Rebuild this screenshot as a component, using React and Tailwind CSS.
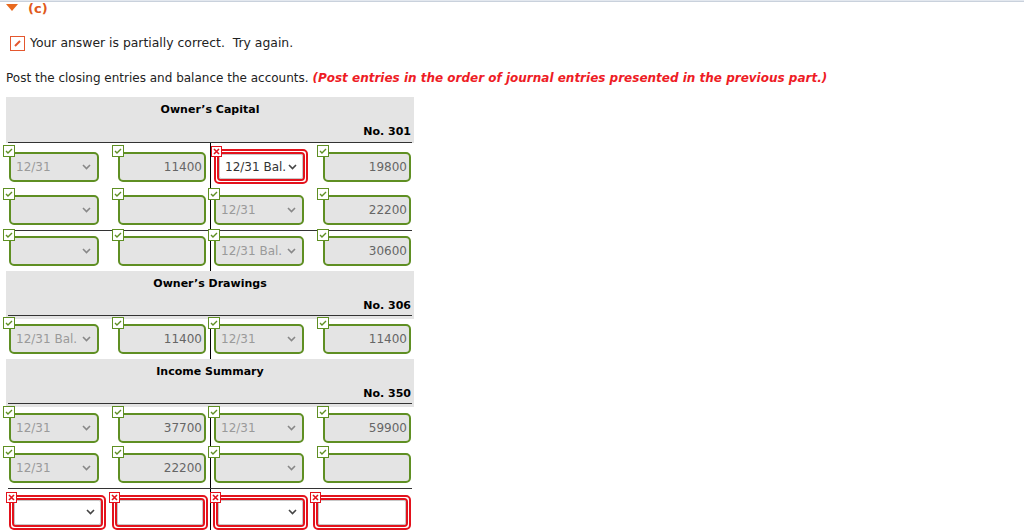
import React from 'react';

const FONT = "font-['DejaVu_Sans','Verdana',sans-serif]";

function Chevron({ color = '#777' }) {
  return (
    <svg width="9" height="6" viewBox="0 0 9 6" className="shrink-0">
      <path d="M1 1 L4.5 4.5 L8 1" fill="none" stroke={color} strokeWidth="1.6" />
    </svg>
  );
}

function OkMark() {
  return (
    <span className="absolute -left-[6px] -top-[7px] z-10 flex h-[12px] w-[12px] items-center justify-center border border-[#5f8f23] bg-white">
      <svg width="8" height="6" viewBox="0 0 8 6">
        <path d="M1 3 L3 5 L7 1" fill="none" stroke="#5f8f23" strokeWidth="1.4" />
      </svg>
    </span>
  );
}

function BadMark() {
  return (
    <span className="absolute -left-[3px] -top-[3px] z-10 flex h-[11px] w-[11px] items-center justify-center border border-[#e3121c] bg-white">
      <svg width="7" height="7" viewBox="0 0 7 7">
        <path d="M1 1 L6 6 M6 1 L1 6" fill="none" stroke="#e3121c" strokeWidth="1.6" />
      </svg>
    </span>
  );
}

// one answer field, green when graded right, red double border when wrong
function Field({ kind, value = '', ok = true, width, ml = 0 }) {
  const isSelect = kind === 'select';
  if (ok) {
    return (
      <div className="relative shrink-0" style={{ width, marginLeft: ml }}>
        <OkMark />
        <div
          className={`flex h-[30px] items-center rounded-[5px] border-2 border-[#5f8f23] bg-[#e4e4e4] ${
            isSelect ? 'justify-between pl-[5px] pr-[6px] text-[#9a9a9a]' : 'justify-end pr-[2px] text-[#666]'
          }`}
        >
          <span className="whitespace-nowrap">{value}</span>
          {isSelect && <Chevron color="#888" />}
        </div>
      </div>
    );
  }
  return (
    <div className="relative shrink-0" style={{ width, marginLeft: ml }}>
      <BadMark />
      <div className="h-[35px] rounded-[5px] border-2 border-[#e3121c] bg-white p-[1px]">
        <div className="h-full rounded-[4px] border-2 border-[#e3121c]">
          <div
            className={`flex h-full items-center rounded-[2px] border border-[#c8c8c8] pl-[5px] pr-[5px] text-[#333] ${
              isSelect ? 'justify-between' : 'justify-end'
            }`}
          >
            <span className="whitespace-nowrap">{value}</span>
            {isSelect && <Chevron color="#444" />}
          </div>
        </div>
      </div>
    </div>
  );
}

function Row({ h, children }) {
  const [a, b, c, d] = children;
  return (
    <div className="flex items-center" style={{ height: h }}>
      <div className="flex h-full w-[104px] items-center">{a}</div>
      <div className="flex h-full w-[100px] items-center">{b}</div>
      <div className="flex h-full w-[103px] items-center border-l border-black">{c}</div>
      <div className="flex h-full w-[101px] items-center">{d}</div>
    </div>
  );
}

function Rule() {
  return <div className="mx-[2px] h-px bg-[#333]" />;
}

function Header({ title, no, gap, tail }) {
  return (
    <div className="bg-[#e4e4e4] pt-[5px]" style={{ paddingBottom: tail }}>
      <div className="text-center text-[11px] font-bold leading-[16px] text-black">{title}</div>
      <div className="mt-[6px] pr-[3px] text-right text-[11px] font-bold leading-[16px] text-black">{no}</div>
      <div style={{ height: gap }} />
      <Rule />
    </div>
  );
}

export default function App() {
  return (
    <div className={`${FONT} min-h-[530px] bg-white text-[12px] text-[#222]`}>
      <div className="h-[2px] border-b border-[#c9d1dc] bg-[#e3e8ef]" />

      <div className="flex h-[12px] items-center pl-[6px] text-[#e05a1c]">
        <svg width="12" height="8" viewBox="0 0 12 8">
          <path d="M0 0 H12 L6 7 Z" fill="#e8691e" />
        </svg>
        <span className="ml-[10px] text-[13px] font-bold leading-none">(c)</span>
      </div>

      <div className="mt-[21px] flex h-[16px] items-center pl-[10px]">
        <span className="flex h-[15px] w-[15px] items-center justify-center border border-[#e4572e] bg-white">
          <svg width="9" height="9" viewBox="0 0 9 9">
            <path d="M2 7 L7 2" stroke="#e4572e" strokeWidth="2" />
          </svg>
        </span>
        <span className="ml-[5px] text-[12.4px] leading-[16px]">
          Your answer is partially correct.&nbsp;&nbsp;Try again.
        </span>
      </div>

      <div className="mt-[19px] pl-[6px] leading-[16px]">
        Post the closing entries and balance the accounts.{' '}
        <span className="font-bold italic text-[#ee1c25]">
          (Post entries in the order of journal entries presented in the previous part.)
        </span>
      </div>

      <div className="ml-[6px] mt-[11px] w-[408px]">
        <Header title="Owner’s Capital" no="No. 301" gap={2} tail={0} />
        <Row h={47}>
          <Field kind="select" value="12/31" width={90} ml={3} />
          <Field kind="input" value="11400" width={88} ml={8} />
          <Field kind="select" value="12/31 Bal." ok={false} width={94} ml={3} />
          <Field kind="input" value="19800" width={88} ml={10} />
        </Row>
        <Row h={40}>
          <Field kind="select" width={90} ml={3} />
          <Field kind="input" width={88} ml={8} />
          <Field kind="select" value="12/31" width={90} ml={3} />
          <Field kind="input" value="22200" width={88} ml={10} />
        </Row>
        <Rule />
        <Row h={40}>
          <Field kind="select" width={90} ml={3} />
          <Field kind="input" width={88} ml={8} />
          <Field kind="select" value="12/31 Bal." width={90} ml={3} />
          <Field kind="input" value="30600" width={88} ml={10} />
        </Row>

        <Header title="Owner’s Drawings" no="No. 306" gap={1} tail={3} />
        <Row h={40}>
          <Field kind="select" value="12/31 Bal." width={90} ml={3} />
          <Field kind="input" value="11400" width={88} ml={8} />
          <Field kind="select" value="12/31" width={90} ml={3} />
          <Field kind="input" value="11400" width={88} ml={10} />
        </Row>

        <Header title="Income Summary" no="No. 350" gap={1} tail={3} />
        <Row h={41}>
          <Field kind="select" value="12/31" width={90} ml={3} />
          <Field kind="input" value="37700" width={88} ml={8} />
          <Field kind="select" value="12/31" width={90} ml={3} />
          <Field kind="input" value="59900" width={88} ml={10} />
        </Row>
        <Row h={40}>
          <Field kind="select" value="12/31" width={90} ml={3} />
          <Field kind="input" value="22200" width={88} ml={8} />
          <Field kind="select" width={90} ml={3} />
          <Field kind="input" width={88} ml={10} />
        </Row>
        <Rule />
        <Row h={46}>
          <Field kind="select" ok={false} width={97} ml={3} />
          <Field kind="input" ok={false} width={96} ml={2} />
          <Field kind="select" ok={false} width={95} ml={2} />
          <Field kind="input" ok={false} width={98} ml={0} />
        </Row>
      </div>
    </div>
  );
}
